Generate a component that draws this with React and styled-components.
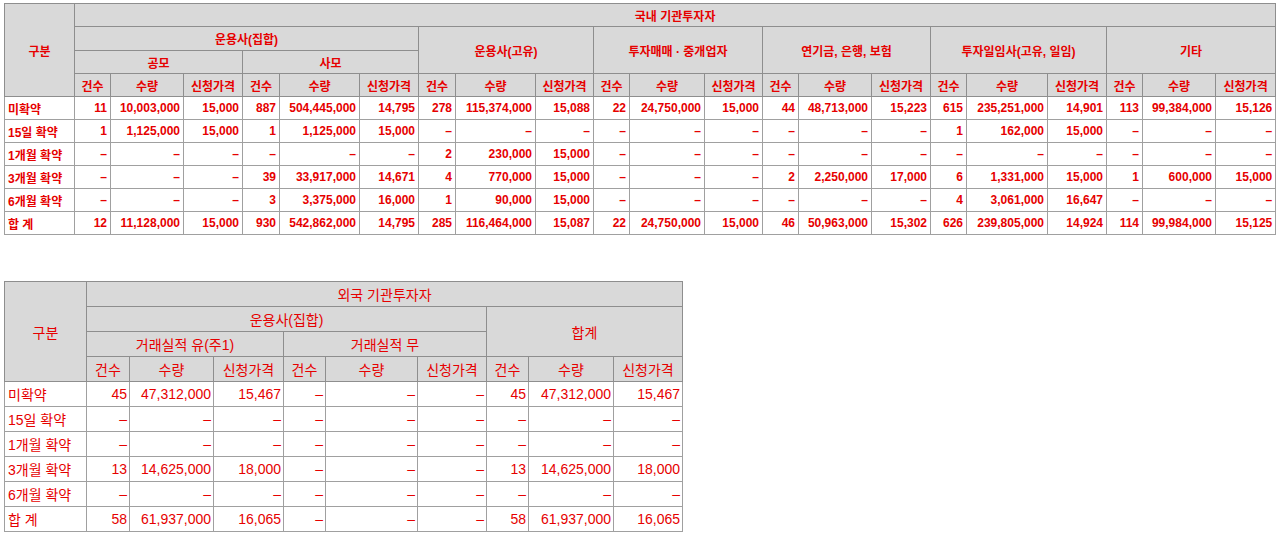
import React from 'react';
import styled, { createGlobalStyle } from 'styled-components';

const GlobalStyle = createGlobalStyle`
  html, body {
    margin: 0;
    padding: 0;
    background: #fff;
  }
  body {
    padding: 3px 4px;
    font-family: "Liberation Sans", "Noto Sans CJK KR", sans-serif;
  }
`;

const Wrapper = styled.div`
  display: flex;
  flex-direction: column;
  align-items: flex-start;
  gap: ${props => props.$gap}px;
`;

const Table = styled.table`
  border-collapse: collapse;
  table-layout: fixed;
  width: ${props => props.$width}px;
  border: 1px solid #333;
  color: #e60000;
  font-size: ${props => props.$size}px;
  font-weight: ${props => (props.$bold ? 700 : 400)};
  font-family: "Liberation Sans", "Noto Sans CJK KR", sans-serif;

  tr {
    height: ${props => props.$rowH}px;
  }
`;

const HeadCell = styled.th`
  background: #d9d9d9;
  border: 1px solid #8e8e8e;
  font-weight: inherit;
  text-align: center;
  padding: 0;
  white-space: nowrap;
  overflow: hidden;
`;

const LabelCell = styled.td`
  border: 1px solid #a0a0a0;
  text-align: left;
  padding: 0 3px;
  white-space: nowrap;
  overflow: hidden;
`;

const NumCell = styled.td`
  border: 1px solid #a0a0a0;
  text-align: right;
  padding: 0 ${props => props.$pad}px 0 0;
  white-space: nowrap;
  overflow: hidden;
`;

const labels = ['미확약', '15일 확약', '1개월 확약', '3개월 확약', '6개월 확약', '합 계'];
const sub = ['건수', '수량', '신청가격'];

const topCols = [70, 36, 73, 59, 37, 80, 59, 37, 80, 58, 36, 75, 58, 36, 73, 59, 36, 81, 59, 36, 73, 60];

const topRows = [
  ['11', '10,003,000', '15,000', '887', '504,445,000', '14,795', '278', '115,374,000', '15,088', '22', '24,750,000', '15,000', '44', '48,713,000', '15,223', '615', '235,251,000', '14,901', '113', '99,384,000', '15,126'],
  ['1', '1,125,000', '15,000', '1', '1,125,000', '15,000', '-', '-', '-', '-', '-', '-', '-', '-', '-', '1', '162,000', '15,000', '-', '-', '-'],
  ['-', '-', '-', '-', '-', '-', '2', '230,000', '15,000', '-', '-', '-', '-', '-', '-', '-', '-', '-', '-', '-', '-'],
  ['-', '-', '-', '39', '33,917,000', '14,671', '4', '770,000', '15,000', '-', '-', '-', '2', '2,250,000', '17,000', '6', '1,331,000', '15,000', '1', '600,000', '15,000'],
  ['-', '-', '-', '3', '3,375,000', '16,000', '1', '90,000', '15,000', '-', '-', '-', '-', '-', '-', '4', '3,061,000', '16,647', '-', '-', '-'],
  ['12', '11,128,000', '15,000', '930', '542,862,000', '14,795', '285', '116,464,000', '15,087', '22', '24,750,000', '15,000', '46', '50,963,000', '15,302', '626', '239,805,000', '14,924', '114', '99,984,000', '15,125'],
];

const bottomCols = [82, 43, 84, 70, 42, 92, 69, 42, 85, 69];

const bottomRows = [
  ['45', '47,312,000', '15,467', '-', '-', '-', '45', '47,312,000', '15,467'],
  ['-', '-', '-', '-', '-', '-', '-', '-', '-'],
  ['-', '-', '-', '-', '-', '-', '-', '-', '-'],
  ['13', '14,625,000', '18,000', '-', '-', '-', '13', '14,625,000', '18,000'],
  ['-', '-', '-', '-', '-', '-', '-', '-', '-'],
  ['58', '61,937,000', '16,065', '-', '-', '-', '58', '61,937,000', '16,065'],
];

const Body = ({ rows, pad }) =>
  rows.map((row, i) => (
    <tr key={i}>
      <LabelCell>{labels[i]}</LabelCell>
      {row.map((v, j) => (
        <NumCell key={j} $pad={pad}>{v === '-' ? '–' : v}</NumCell>
      ))}
    </tr>
  ));

const SubHeads = ({ groups }) =>
  Array.from({ length: groups }).flatMap((_, g) =>
    sub.map(s => <HeadCell key={g + s}>{s}</HeadCell>)
  );

const DomesticTable = () => (
  <Table $width={1271} $size={12} $bold $rowH={23}>
    <colgroup>
      {topCols.map((w, i) => <col key={i} style={{ width: w }} />)}
    </colgroup>
    <thead>
      <tr>
        <HeadCell rowSpan={4}>구분</HeadCell>
        <HeadCell colSpan={21}>국내 기관투자자</HeadCell>
      </tr>
      <tr style={{ height: 24 }}>
        <HeadCell colSpan={6}>운용사(집합)</HeadCell>
        <HeadCell colSpan={3} rowSpan={2}>운용사(고유)</HeadCell>
        <HeadCell colSpan={3} rowSpan={2}>투자매매 · 중개업자</HeadCell>
        <HeadCell colSpan={3} rowSpan={2}>연기금, 은행, 보험</HeadCell>
        <HeadCell colSpan={3} rowSpan={2}>투자일임사(고유, 일임)</HeadCell>
        <HeadCell colSpan={3} rowSpan={2}>기타</HeadCell>
      </tr>
      <tr>
        <HeadCell colSpan={3}>공모</HeadCell>
        <HeadCell colSpan={3}>사모</HeadCell>
      </tr>
      <tr>
        <SubHeads groups={7} />
      </tr>
    </thead>
    <tbody>
      <Body rows={topRows} pad={3} />
    </tbody>
  </Table>
);

const ForeignTable = () => (
  <Table $width={678} $size={14} $rowH={25}>
    <colgroup>
      {bottomCols.map((w, i) => <col key={i} style={{ width: w }} />)}
    </colgroup>
    <thead>
      <tr>
        <HeadCell rowSpan={4}>구분</HeadCell>
        <HeadCell colSpan={9}>외국 기관투자자</HeadCell>
      </tr>
      <tr>
        <HeadCell colSpan={6}>운용사(집합)</HeadCell>
        <HeadCell colSpan={3} rowSpan={2}>합계</HeadCell>
      </tr>
      <tr>
        <HeadCell colSpan={3}>거래실적 유(주1)</HeadCell>
        <HeadCell colSpan={3}>거래실적 무</HeadCell>
      </tr>
      <tr>
        <SubHeads groups={3} />
      </tr>
    </thead>
    <tbody>
      <Body rows={bottomRows} pad={2} />
    </tbody>
  </Table>
);

export default function App() {
  return (
    <>
      <GlobalStyle />
      <Wrapper $gap={46}>
        <DomesticTable />
        <ForeignTable />
      </Wrapper>
    </>
  );
}
